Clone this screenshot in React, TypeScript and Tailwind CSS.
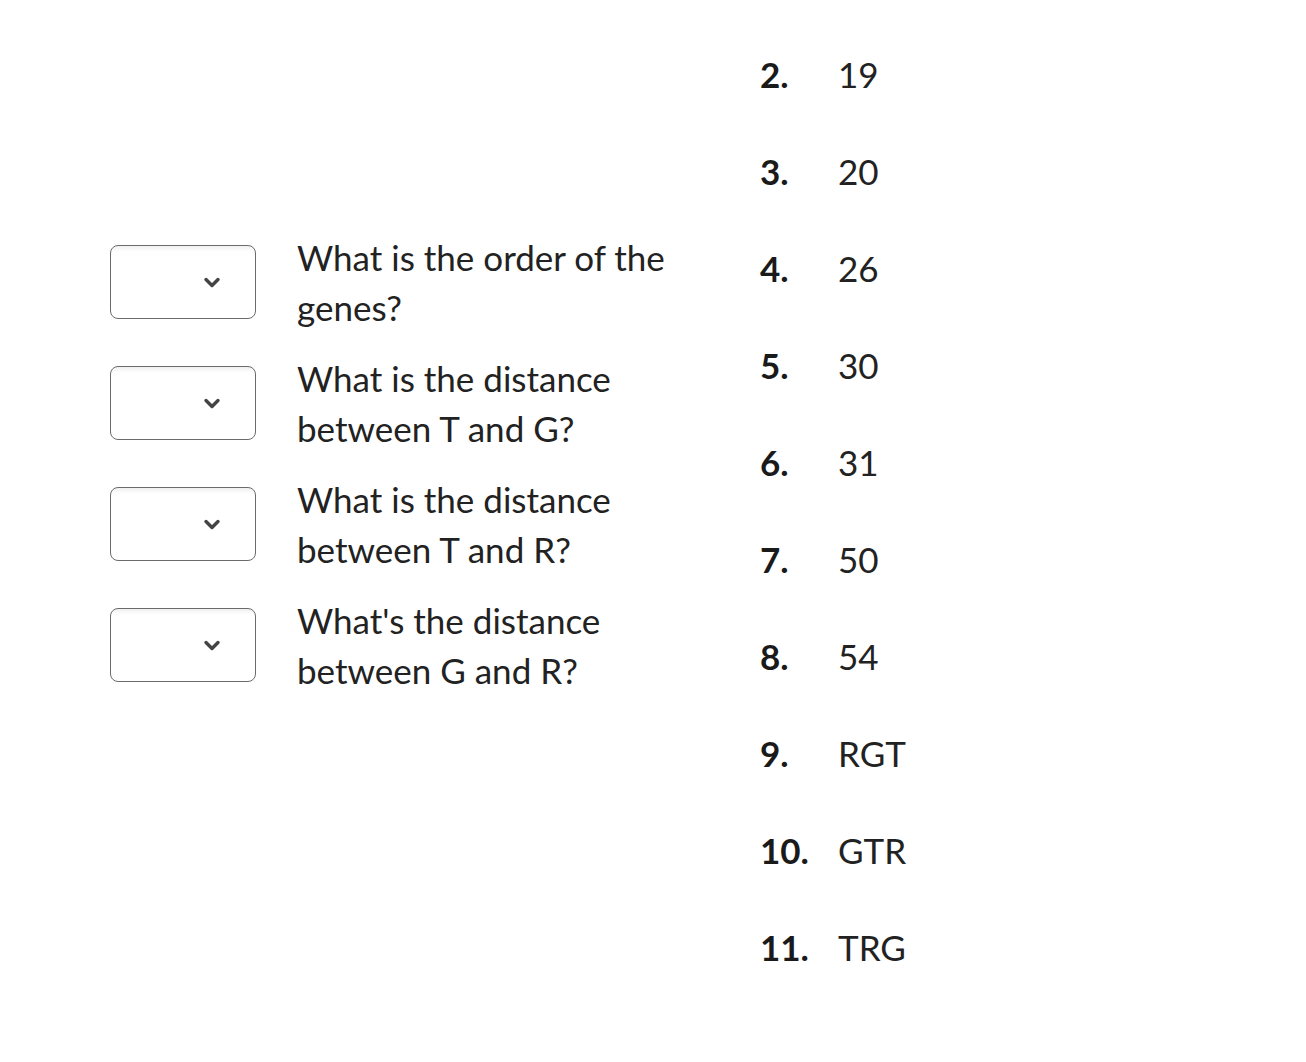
import React from "react";

const questions = [
  ["What is the order of the", "genes?"],
  ["What is the distance", "between T and G?"],
  ["What is the distance", "between T and R?"],
  ["What's the distance", "between G and R?"],
];

const answers = [
  { n: "2.", v: "19" },
  { n: "3.", v: "20" },
  { n: "4.", v: "26" },
  { n: "5.", v: "30" },
  { n: "6.", v: "31" },
  { n: "7.", v: "50" },
  { n: "8.", v: "54" },
  { n: "9.", v: "RGT" },
  { n: "10.", v: "GTR" },
  { n: "11.", v: "TRG" },
];

const Chevron = () => (
  <svg width="18" height="13" viewBox="0 0 18 13" fill="none">
    <path d="M3 3.5l6 6 6-6" stroke="#444444" strokeWidth="3.4" strokeLinecap="round" strokeLinejoin="round" />
  </svg>
);

export default function App() {
  return (
    <div
      className="flex w-[1306px] h-[1062px] bg-white text-[#222222] text-[35px]"
      style={{ fontFamily: "Lato, 'Open Sans', sans-serif" }}
    >
      {/* question column */}
      <div className="w-[760px] pl-[110px] pt-[232px] flex flex-col gap-[21px]">
        {questions.map((q, i) => (
          <div key={i} className="flex items-center">
            <div className="w-[146px] h-[74px] shrink-0 rounded-[8px] border border-[#6b6b6b] bg-gradient-to-b from-[#f0f0f0] to-white to-[8%] flex items-center justify-end pr-[34px]">
              <Chevron />
            </div>
            <div className="ml-[41px] w-[420px] leading-[50px]">
              <div>{q[0]}</div>
              <div>{q[1]}</div>
            </div>
          </div>
        ))}
      </div>

      {/* answer list */}
      <div className="pt-[26px] flex flex-col">
        {answers.map((a) => (
          <div key={a.n} className="h-[97px] flex items-center">
            <span className="w-[78px] font-bold text-[#1a1a1a]">{a.n}</span>
            <span>{a.v}</span>
          </div>
        ))}
      </div>
    </div>
  );
}
